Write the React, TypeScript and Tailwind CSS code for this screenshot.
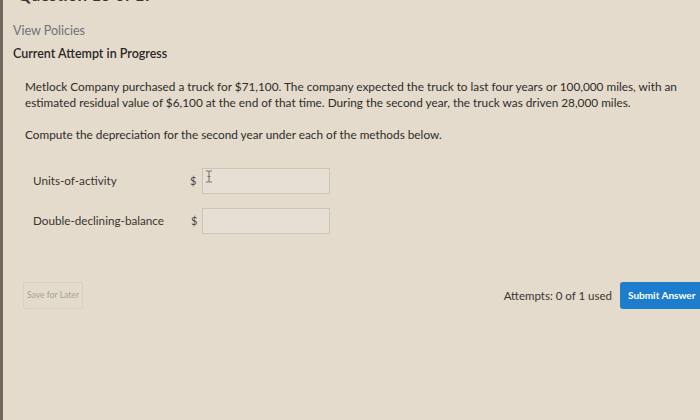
export default function App() {
  return (
    <div className="relative h-[420px] w-[700px] overflow-hidden border-l-[3px] border-[#716960] bg-[#e4dbcd] font-['Lato','Open_Sans',sans-serif] text-[#2f2b27]">
      <div className="-mt-[15px] pl-[14px] text-[17px] font-bold leading-[20px] text-[#3a342e]">Question 15 of 17</div>

      <div className="pl-[10px] pt-[18px]">
        <div className="text-[12.5px] leading-[16px] text-[#6d7278]">View Policies</div>
        <div className="mt-[7px] text-[12.5px] font-semibold leading-[16px] text-[#2b2723]">Current Attempt in Progress</div>
      </div>

      <div className="pl-[22px] pr-[14px] pt-[17px]">
        <p className="text-[11.8px] leading-[16px] text-[#2f2b27]">
          Metlock Company purchased a truck for $71,100. The company expected the truck to last four years or 100,000 miles, with an estimated residual value of $6,100 at the end of that time. During the second year, the truck was driven 28,000 miles.
        </p>
        <p className="mt-[16px] text-[11.8px] leading-[16px] text-[#2f2b27]">
          Compute the depreciation for the second year under each of the methods below.
        </p>
      </div>

      <div className="mt-[25px] flex flex-col gap-[14px] pl-[30px]">
        <div className="flex items-center">
          <span className="w-[157px] text-[11.7px] text-[#3a3530]">Units-of-activity</span>
          <span className="w-[12px] text-[11px] text-[#4a443e]">$</span>
          <div className="relative h-[26px] w-[128px] border border-[#cdc4b6] bg-[#e7dfd3]">
            <svg className="absolute left-[2px] top-[1px]" width="8" height="13" viewBox="0 0 8 13">
              <path d="M1 1h2.2c.5 0 .8.3.8.8V11.2c0 .5.3.8.8.8H7M7 1H4.8c-.5 0-.8.3-.8.8M4 11.2c0 .5-.3.8-.8.8H1M2.5 6.5h3" fill="none" stroke="#6b645c" strokeWidth="0.9" />
            </svg>
          </div>
        </div>
        <div className="flex items-center">
          <span className="w-[158px] text-[11.7px] text-[#3a3530]">Double-declining-balance</span>
          <span className="w-[11px] text-[11px] text-[#4a443e]">$</span>
          <div className="h-[26px] w-[128px] border border-[#cdc4b6] bg-[#e7dfd3]" />
        </div>
      </div>

      <div className="mt-[48px] flex items-center pl-[20px]">
        <button className="h-[27px] w-[60px] whitespace-nowrap rounded-[2px] border border-[#d8d0c4] px-0 text-center text-[8.6px] text-[#a8a198]">Save for Later</button>
        <div className="flex-1" />
        <span className="text-[11.5px] text-[#3a3530]">Attempts: 0 of 1 used</span>
        <button className="ml-[8px] h-[27px] w-[80px] whitespace-nowrap rounded-l-[3px] bg-[#1b7dcc] pl-[8px] text-left text-[10px] font-bold text-white">Submit Answer</button>
      </div>
    </div>
  );
}
